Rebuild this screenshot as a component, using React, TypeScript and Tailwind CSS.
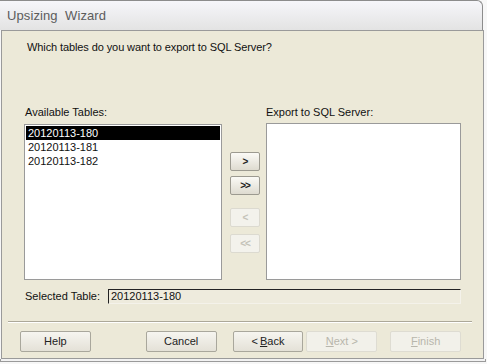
import React from "react";

const font = { fontFamily: '"Liberation Sans", Arial, sans-serif' };

function SmallBtn({ label, disabled, className }: { label: string; disabled?: boolean; className?: string }) {
  return (
    <div
      className={
        "w-[30px] h-[19px] flex items-center justify-center text-[10px] font-bold tracking-[-1px] rounded-[2px] border " +
        (disabled
          ? "border-[#dcdad0] bg-[#f3f2ec] text-[#c4c2b8] "
          : "border-[#9c9a90] bg-gradient-to-b from-[#fbfaf6] to-[#dedbd0] text-[#222] ") +
        (className ?? "")
      }
    >
      {label}
    </div>
  );
}

function BigBtn({ children, disabled, className }: { children: React.ReactNode; disabled?: boolean; className?: string }) {
  return (
    <div
      className={
        "w-[71px] h-[21px] flex items-center justify-center text-[11px] border rounded-[2px] " +
        (disabled
          ? "border-[#dedcd2] bg-[#f2f1ea] text-[#b8b6ac] "
          : "border-[#a9a79c] bg-gradient-to-b from-[#f6f5f0] to-[#e4e1d7] text-[#222] ") +
        (className ?? "")
      }
    >
      {children}
    </div>
  );
}

export default function App() {
  return (
    <div className="w-[487px] h-[364px] bg-[#f7f7f7] flex flex-col overflow-hidden" style={font}>
      {/* title bar */}
      <div className="h-[30px] shrink-0 flex items-center pl-[7px] border-t border-r border-[#8c8c8c] rounded-tr-[6px] mr-[4px] bg-gradient-to-b from-[#f6f6fa] to-[#e3e3e3]">
        <span className="text-[13px] text-[#5c5c5c] tracking-[0.1px]">Upsizing&nbsp; Wizard</span>
      </div>
      {/* panel */}
      <div className="h-[329px] shrink-0 ml-[1px] mr-[3px] border border-[#9a9a9a] bg-[#ECE9D8] flex flex-col px-[22px]">
        <div className="mt-[10px] ml-[3px] text-[11px] leading-[13px] text-[#111] tracking-[-0.1px]">
          Which tables do you want to export to SQL Server?
        </div>

        <div className="mt-[52px] flex">
          {/* left */}
          <div className="w-[198px] flex flex-col">
            <div className="ml-[1px] text-[11px] leading-[13px] text-[#111]">Available Tables:</div>
            <div className="mt-[5px] h-[156px] border border-[#9a9a9a] bg-white pt-[1px]">
              <div className="h-[14px] mx-[1px] bg-black text-white text-[11px] leading-[14px] pl-[2px]">20120113-180</div>
              <div className="h-[14px] text-[#111] text-[11px] leading-[14px] pl-[3px]">20120113-181</div>
              <div className="h-[14px] text-[#111] text-[11px] leading-[14px] pl-[3px]">20120113-182</div>
            </div>
          </div>
          {/* middle */}
          <div className="w-[44px] flex flex-col pl-[8px] pt-[46px]">
            <SmallBtn label=">" />
            <SmallBtn label=">>" className="mt-[5px]" />
            <SmallBtn label="<" disabled className="mt-[13px]" />
            <SmallBtn label="<<" disabled className="mt-[7px]" />
          </div>
          {/* right */}
          <div className="flex-1 flex flex-col">
            <div className="text-[11px] leading-[13px] text-[#111]">Export to SQL Server:</div>
            <div className="mt-[4px] h-[157px] border border-[#9a9a9a] bg-white" />
          </div>
        </div>

        <div className="mt-[9px] flex items-center">
          <div className="w-[83px] ml-[1px] text-[11px] leading-[13px] text-[#111]">Selected Table:</div>
          <div className="flex-1 h-[15px] border-t border-l border-[#222] border-r border-b border-r-[#f4f2ea] border-b-[#f4f2ea] bg-[#EEEBDD] text-[11px] leading-[13px] pl-[2px] text-[#111]">
            20120113-180
          </div>
        </div>

        <div className="mt-[17px] -ml-[16px] -mr-[11px] h-[2px] border-t border-[#aca899] border-b border-b-[#ffffff]" />

        <div className="mt-[8px] flex -ml-[4px]">
          <BigBtn>Help</BigBtn>
          <BigBtn className="ml-[55px]">Cancel</BigBtn>
          <BigBtn className="ml-[16px]">
            &lt; <span className="underline ml-[2px]">B</span>ack
          </BigBtn>
          <BigBtn disabled className="ml-[3px]">
            <span className="underline">N</span>ext &gt;
          </BigBtn>
          <BigBtn disabled className="ml-[13px]">
            <span className="underline">F</span>inish
          </BigBtn>
        </div>
      </div>
      <div className="h-[3px] ml-[0px] mr-[1px] border-l border-r border-b border-[#9a9a9a] bg-[#f2f2f2]" />
    </div>
  );
}
